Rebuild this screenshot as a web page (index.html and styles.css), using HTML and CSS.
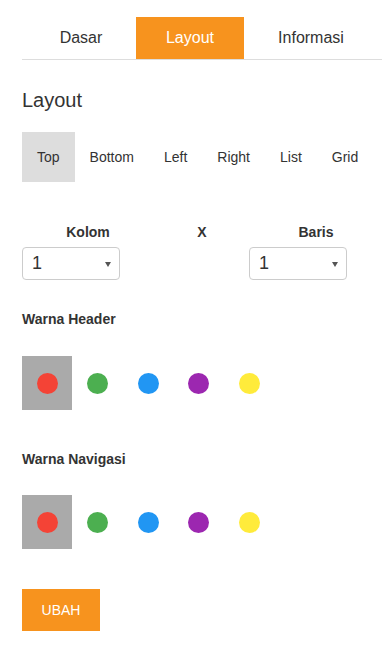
FILE: index.html
```html
<!DOCTYPE html>
<html lang="id">
<head>
<meta charset="utf-8">
<title>Layout</title>
<link rel="stylesheet" href="styles.css">
</head>
<body>
<div class="page">
  <nav class="tabs">
    <a class="tab tab-dasar">Dasar</a>
    <a class="tab tab-active">Layout</a>
    <a class="tab">Informasi</a>
  </nav>

  <h2 class="heading">Layout</h2>

  <div class="positions">
    <span class="pos pos-active">Top</span>
    <span class="pos">Bottom</span>
    <span class="pos">Left</span>
    <span class="pos">Right</span>
    <span class="pos">List</span>
    <span class="pos">Grid</span>
  </div>

  <div class="grid-labels">
    <span class="glabel">Kolom</span>
    <span class="glabel">X</span>
    <span class="glabel">Baris</span>
  </div>
  <div class="selects">
    <div class="select"><span class="select-value">1</span><span class="select-arrow"></span></div>
    <div class="select"><span class="select-value">1</span><span class="select-arrow"></span></div>
  </div>

  <h4 class="label label-header">Warna Header</h4>
  <div class="swatches">
    <span class="swatch swatch-active"><span class="dot red"></span></span>
    <span class="swatch"><span class="dot green"></span></span>
    <span class="swatch"><span class="dot blue"></span></span>
    <span class="swatch"><span class="dot purple"></span></span>
    <span class="swatch"><span class="dot yellow"></span></span>
  </div>

  <h4 class="label label-nav">Warna Navigasi</h4>
  <div class="swatches swatches-nav">
    <span class="swatch swatch-active"><span class="dot red"></span></span>
    <span class="swatch"><span class="dot green"></span></span>
    <span class="swatch"><span class="dot blue"></span></span>
    <span class="swatch"><span class="dot purple"></span></span>
    <span class="swatch"><span class="dot yellow"></span></span>
  </div>

  <button class="btn">UBAH</button>
</div>
</body>
</html>
```

FILE: styles.css
```css
* { box-sizing: border-box; }

html, body {
  margin: 0;
  padding: 0;
  background: #fff;
}

body {
  font-family: "Liberation Sans", Arial, Helvetica, sans-serif;
  color: #333;
}

.page {
  padding-left: 22px;
  padding-top: 17px;
}

.tabs {
  display: grid;
  grid-template-columns: 114px 108px 134px;
  border-bottom: 1px solid #ddd;
}

.tab {
  height: 42px;
  display: flex;
  align-items: center;
  justify-content: center;
  font-size: 16px;
  color: #333;
}

.tab-dasar { padding-left: 4px; }

.tab-active {
  background: #f7931e;
  color: #fff;
}

.heading {
  margin: 29px 0 0;
  font-size: 20px;
  line-height: 22px;
  font-weight: normal;
  color: #333;
}

.positions {
  display: flex;
  margin-top: 21px;
}

.pos {
  padding: 15px;
  font-size: 14px;
  line-height: 20px;
  color: #333;
}

.pos-active {
  background: #ddd;
}

.grid-labels {
  display: grid;
  grid-template-columns: 114px 114px 114px;
  margin-top: 40px;
  margin-left: 9px;
}

.glabel {
  text-align: center;
  font-size: 14px;
  line-height: 20px;
  font-weight: bold;
  color: #333;
}

.selects {
  display: flex;
  gap: 129px;
  margin-top: 5px;
}

.select {
  width: 98px;
  height: 33px;
  border: 1px solid #ccc;
  border-radius: 4px;
  display: flex;
  align-items: center;
  justify-content: space-between;
  padding: 0 8px 0 9px;
  background: #fff;
}

.select-value {
  font-size: 18px;
  color: #333;
}

.select-arrow {
  width: 0;
  height: 0;
  border-left: 3px solid transparent;
  border-right: 3px solid transparent;
  border-top: 5px solid #555;
  margin-top: 1px;
}

.label {
  margin: 29px 0 0;
  font-size: 14px;
  line-height: 20px;
  font-weight: bold;
  color: #333;
}

.label-nav {
  margin-top: 39px;
}

.swatches {
  display: flex;
  margin-top: 27px;
}

.swatches-nav {
  margin-top: 26px;
}

.swatch {
  width: 50px;
  height: 54px;
  display: flex;
  align-items: center;
  justify-content: center;
  margin-right: 0.5px;
}

.swatch-active {
  background: #aaa;
}

.dot {
  width: 21px;
  height: 21px;
  border-radius: 50%;
}

.red { background: #f44336; }
.green { background: #4caf50; }
.blue { background: #2196f3; }
.purple { background: #9c27b0; }
.yellow { background: #ffeb3b; }

.btn {
  display: block;
  margin-top: 40px;
  width: 78px;
  height: 42px;
  border: none;
  background: #f7931e;
  color: #fff;
  font-family: "Liberation Sans", Arial, Helvetica, sans-serif;
  font-size: 14px;
  padding: 0;
}
```
